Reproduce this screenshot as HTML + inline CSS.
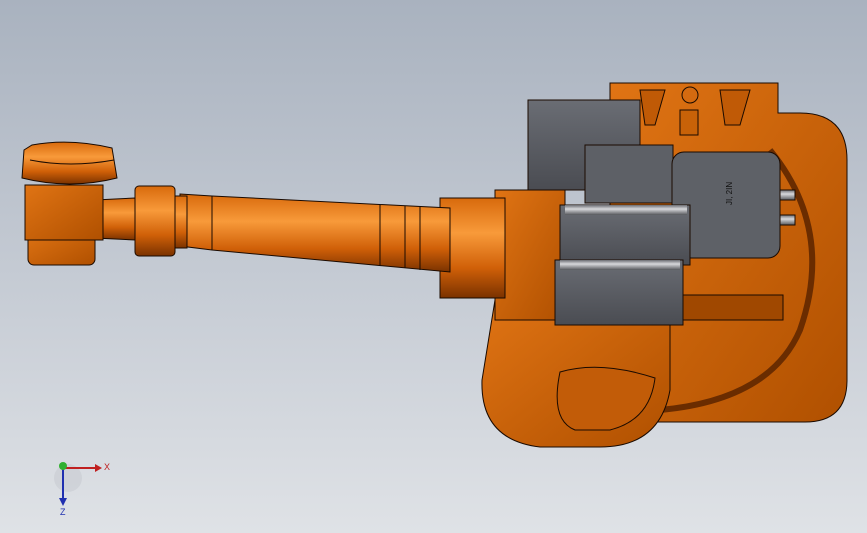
<!DOCTYPE html>
<html><head><style>
html,body{margin:0;padding:0;width:867px;height:533px;overflow:hidden}
body{background:linear-gradient(180deg,#a9b2bf 0%,#c4cad3 50%,#dfe2e6 100%)}
svg{position:absolute;left:0;top:0}
</style></head><body>
<svg width="867" height="533" viewBox="0 0 867 533">
<defs>
<linearGradient id="tube" x1="0" y1="0" x2="0" y2="1">
<stop offset="0" stop-color="#d86a0c"/><stop offset="0.35" stop-color="#f89a3a"/><stop offset="0.7" stop-color="#d06008"/><stop offset="1" stop-color="#7a3200"/>
</linearGradient>
<linearGradient id="or" x1="0" y1="0" x2="1" y2="1">
<stop offset="0" stop-color="#e07414"/><stop offset="1" stop-color="#b05000"/>
</linearGradient>
<linearGradient id="gr" x1="0" y1="0" x2="0" y2="1">
<stop offset="0" stop-color="#6a6d74"/><stop offset="1" stop-color="#4a4c52"/>
</linearGradient>
<linearGradient id="rod" x1="0" y1="0" x2="0" y2="1">
<stop offset="0" stop-color="#6b6d72"/><stop offset="0.4" stop-color="#d8d9dc"/><stop offset="1" stop-color="#55575c"/>
</linearGradient>
</defs>
<g stroke="#1a0a00" stroke-width="1">
<path d="M610 83 H778 V113 H800 Q847 113 847 160 V380 Q847 422 805 422 H643 V300 H610 Z" fill="url(#or)"/>
<path d="M770 150 Q835 230 800 330 Q770 400 660 410" fill="none" stroke="#6a2c00" stroke-width="6"/>
<path d="M640 90 H665 L655 125 H645 Z M720 90 H750 L740 125 H725 Z" fill="#c05a06"/>
<circle cx="690" cy="95" r="8" fill="#d46a10"/>
<rect x="680" y="110" width="18" height="25" fill="#c86208"/>
<path d="M495 300 H670 V390 Q660 447 600 447 H540 Q480 440 482 380 Z" fill="url(#or)"/>
<path d="M560 372 Q600 360 655 378 Q650 420 610 430 H575 Q550 420 560 372 Z" fill="#c25c08"/>
<rect x="528" y="100" width="112" height="90" fill="url(#gr)"/>
<rect x="585" y="145" width="88" height="58" fill="#5d6066"/>
<rect x="672" y="152" width="108" height="106" rx="12" fill="#5e6167"/>
<text x="722" y="215" font-family="Liberation Sans,sans-serif" font-size="8" fill="#111" stroke="none" transform="rotate(-90 722 205)">JI, 2IN</text>
<rect x="780" y="190" width="15" height="10" fill="url(#rod)"/>
<rect x="780" y="215" width="15" height="10" fill="url(#rod)"/>
<rect x="495" y="190" width="70" height="130" fill="url(#or)"/>
<rect x="440" y="198" width="65" height="100" fill="url(#tube)"/>
<rect x="560" y="205" width="130" height="60" fill="url(#gr)"/>
<rect x="565" y="205" width="122" height="10" fill="url(#rod)" stroke="none"/>
<rect x="555" y="260" width="128" height="65" fill="url(#gr)"/>
<rect x="560" y="260" width="120" height="10" fill="url(#rod)" stroke="none"/>
<rect x="683" y="295" width="100" height="25" fill="#a04800"/>
<path d="M180 194 L212 196 L450 208 L450 272 L212 250 L180 246 Z" fill="url(#tube)"/>
<path d="M212 196 L212 250 M380 205 L380 266 M405 206 L405 268 M420 207 L420 270" fill="none"/>
<path d="M95 200 L135 198 L135 240 L95 238 Z" fill="url(#tube)"/>
<rect x="135" y="186" width="40" height="70" rx="4" fill="url(#tube)"/>
<rect x="175" y="196" width="12" height="52" fill="url(#tube)"/>
<rect x="28" y="230" width="67" height="35" rx="6" fill="url(#or)"/>
<rect x="25" y="185" width="78" height="55" fill="url(#or)"/>
<path d="M32 145 Q70 138 112 148 L117 178 Q70 190 22 178 L24 150 Z" fill="url(#tube)"/>
<path d="M30 160 Q70 168 114 160" fill="none"/>
</g>
<g>
<circle cx="68" cy="478" r="14" fill="#c8ccd2" opacity="0.6"/>
<line x1="63" y1="468" x2="95" y2="468" stroke="#c02020" stroke-width="2"/>
<path d="M95 464 L102 468 L95 472 Z" fill="#c02020"/>
<line x1="63" y1="468" x2="63" y2="500" stroke="#2030b0" stroke-width="2"/>
<path d="M59 498 L63 506 L67 498 Z" fill="#2030b0"/>
<circle cx="63" cy="466" r="4" fill="#30b030"/>
<text x="104" y="470" font-family="Liberation Sans,sans-serif" font-size="9" fill="#c02020">X</text>
<text x="60" y="515" font-family="Liberation Sans,sans-serif" font-size="9" fill="#2030b0">Z</text>
</g>
</svg>
</body></html>
